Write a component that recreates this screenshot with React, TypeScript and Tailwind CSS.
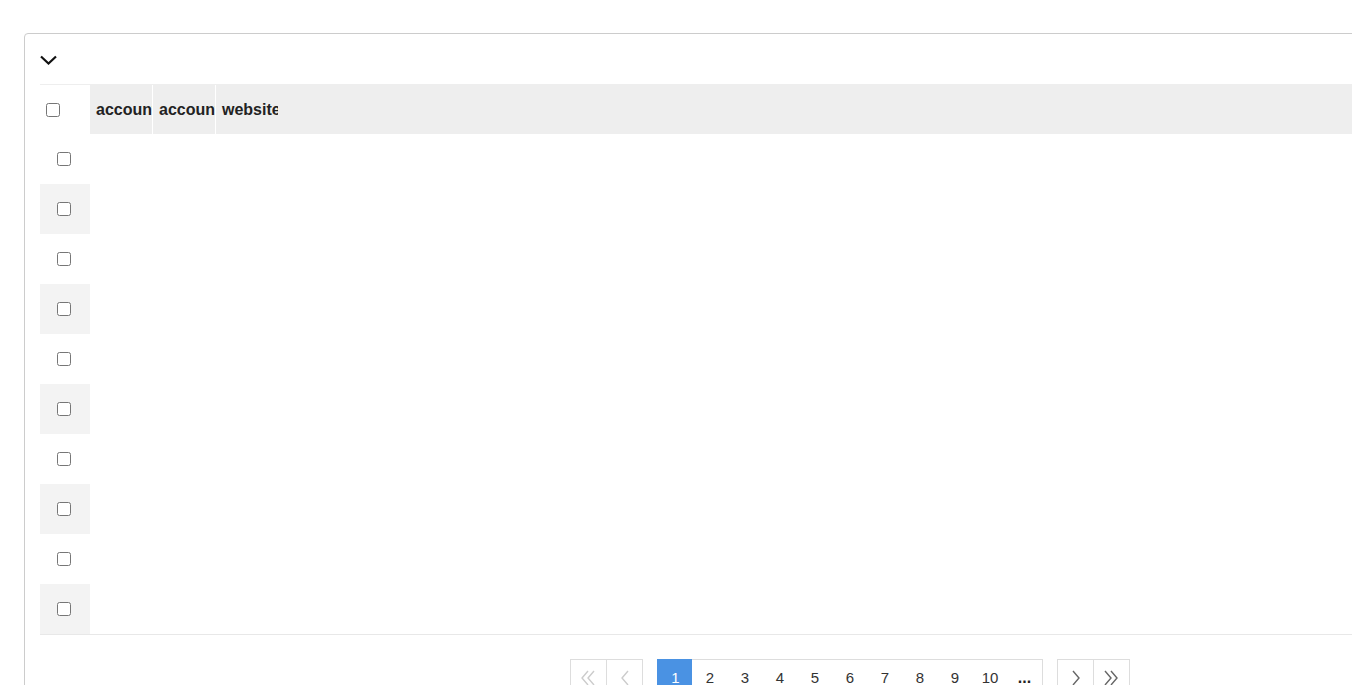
import React from "react";

const columns = ["account_name", "account_type", "website"];
const rows = Array.from({ length: 10 }, (_, i) => i);
const pages = [1, 2, 3, 4, 5, 6, 7, 8, 9, 10];

function Chevron({ dir, double, color }: { dir: "left" | "right"; double?: boolean; color: string }) {
  const pts = dir === "left" ? "7,1 1,8 7,15" : "1,1 7,8 1,15";
  return (
    <svg width={double ? 15 : 8} height="16" viewBox={double ? "0 0 15 16" : "0 0 8 16"} fill="none" stroke={color} strokeWidth="1.4">
      <polyline points={pts} />
      {double && <polyline points={pts} transform="translate(6 0)" />}
    </svg>
  );
}

export default function App() {
  return (
    <div className="w-screen h-screen overflow-hidden bg-white" style={{ fontFamily: '"Liberation Sans", Arial, sans-serif' }}>
      <div className="ml-[24px] mt-[33px] w-[1700px] border border-[#cccccc] rounded-[4px] px-[15px]">
        <div className="h-[50px] flex items-center pt-[2px]">
          <svg width="17" height="10" viewBox="0 0 17 10" fill="none" stroke="#111" strokeWidth="2.2">
            <polyline points="1,1.5 8.5,8.5 16,1.5" />
          </svg>
        </div>

        {/* header */}
        <div className="flex h-[50px] border-t border-[#eeeeee]">
          <div className="w-[50px] flex items-center pl-[6px]">
            <input type="checkbox" className="w-[14px] h-[14px]" />
          </div>
          {columns.map((c, i) => (
            <div
              key={c}
              className={`bg-[#eeeeee] flex items-center pl-[6px] overflow-hidden whitespace-nowrap ${
                i < 2 ? "w-[63px] border-r border-white" : "w-[62px]"
              }`}
            >
              <span className="text-[16px] font-bold text-[#222]">{c}</span>
            </div>
          ))}
          <div className="flex-1 bg-[#eeeeee]" />
        </div>

        {/* body */}
        <div className="border-b border-[#e8e8e8]">
          {rows.map((r) => (
            <div key={r} className="flex h-[50px]">
              <div className={`w-[50px] flex items-center pl-[17px] ${r % 2 === 1 ? "bg-[#f3f3f3]" : ""}`}>
                <input type="checkbox" className="w-[14px] h-[14px]" />
              </div>
            </div>
          ))}
        </div>

        {/* pagination */}
        <div className="flex pl-[530px] mt-[24px] gap-[14px] text-[15px] text-[#333]">
          <div className="flex h-[38px]">
            <button className="w-[37px] border border-[#dddddd] flex items-center justify-center">
              <Chevron dir="left" double color="#cccccc" />
            </button>
            <button className="w-[36px] border-y border-r border-[#dddddd] flex items-center justify-center">
              <Chevron dir="left" color="#cccccc" />
            </button>
          </div>
          <div className="flex h-[38px]">
            {pages.map((p) => (
              <button
                key={p}
                className={`w-[35px] border-y flex items-center justify-center pl-[1px] ${
                  p === 1 ? "border-l bg-[#4a92e3] border-[#4a92e3] text-white" : "border-[#dddddd]"
                }`}
              >
                {p}
              </button>
            ))}
            <button className="w-[36px] border-y border-r border-[#dddddd] flex items-center justify-center font-bold text-[16px] text-[#222]">
              ...
            </button>
          </div>
          <div className="flex h-[38px]">
            <button className="w-[37px] border border-[#dddddd] flex items-center justify-center">
              <Chevron dir="right" color="#666666" />
            </button>
            <button className="w-[36px] border-y border-r border-[#dddddd] flex items-center justify-center">
              <Chevron dir="right" double color="#666666" />
            </button>
          </div>
        </div>
        <div className="h-[40px]" />
      </div>
    </div>
  );
}
